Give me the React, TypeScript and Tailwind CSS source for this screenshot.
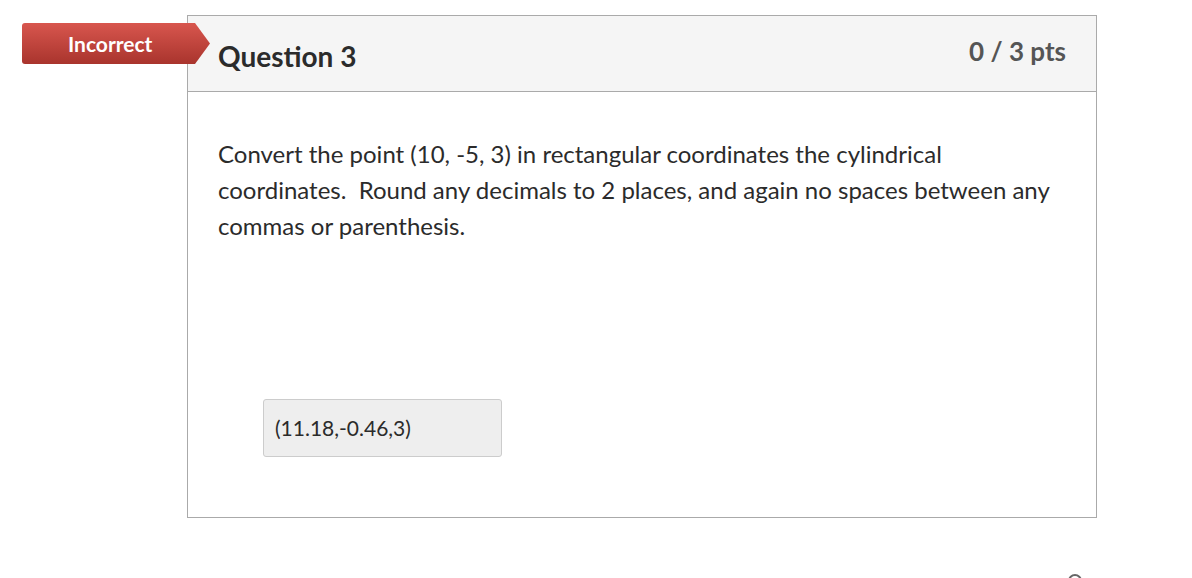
import React from "react";

export default function App() {
  return (
    <div className="relative min-h-[578px] w-[1192px] overflow-hidden bg-white font-['Lato','Open_Sans',sans-serif] text-[#2b2b2b]">
      <div className="pl-[187px] pt-[15px]">
        <div className="relative w-[910px] border border-[#aaaaaa]">
          <div className="absolute left-[-166px] top-[7px] flex h-[41px] w-[188px] items-center rounded-l-[3px] bg-gradient-to-b from-[#d8564e] to-[#a9342d] pl-[46px] pt-[1px] text-[21px] font-bold text-white [clip-path:polygon(0_0,173px_0,188px_50%,173px_100%,0_100%)]">
            Incorrect
          </div>
          <div className="flex h-[76px] items-start justify-between border-b border-[#aaaaaa] bg-[#f5f5f5] pl-[30px] pr-[30px]">
            <h2 className="pt-[23px] text-[28px] font-bold leading-[34px] text-[#2b2b2b]">Question 3</h2>
            <div className="pt-[20px] text-[26px] font-bold leading-[30px] text-[#555555]">0 / 3 pts</div>
          </div>
          <div className="px-[30px] pt-[44px] pb-[60px]">
            <p className="w-[850px] text-[24px] leading-[36px]">
              Convert the point (10, -5, 3) in rectangular coordinates the cylindrical coordinates.&nbsp; Round any decimals to 2 places, and again no spaces between any commas or parenthesis.
            </p>
            <div className="mt-[155px] ml-[45px] flex h-[58px] w-[239px] items-center rounded-[3px] border border-[#cccccc] bg-[#eeeeee] pl-[11px] text-[21px]">
              (11.18,-0.46,3)
            </div>
          </div>
        </div>
      </div>
      <div className="absolute left-[1068px] top-[574px] h-[14px] w-[14px] rounded-full border-2 border-[#666666]" />
    </div>
  );
}
